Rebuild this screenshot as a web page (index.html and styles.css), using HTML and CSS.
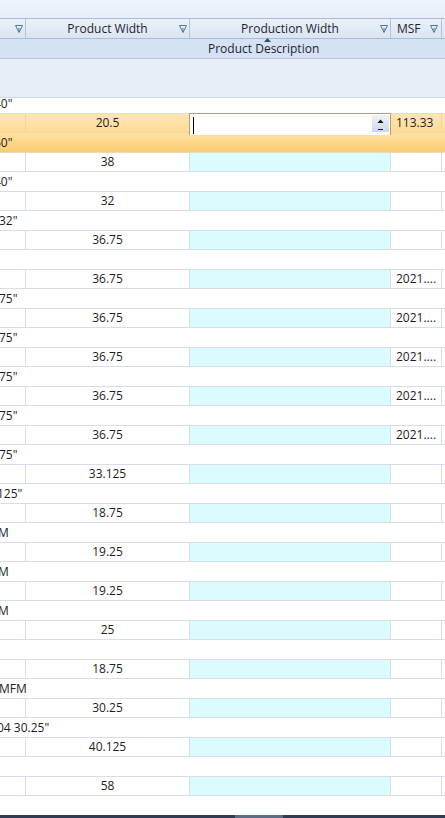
FILE: index.html
```html
<!DOCTYPE html>
<html>
<head>
<meta charset="utf-8">
<link rel="stylesheet" href="styles.css">
</head>
<body>
<div class="grid">
  <div class="top-strip"></div>
  <div class="header cols">
    <div class="hcell h0"><svg class="flt" width="8" height="8" viewBox="0 0 8 8"><path d="M0.5 0.5H7.5L4 7.5Z" fill="none" stroke="#5877a0"/><path d="M4 3V6" stroke="#5877a0"/></svg></div>
    <div class="hcell hc"><span class="lbl">Product Width</span><svg class="flt" width="8" height="8" viewBox="0 0 8 8"><path d="M0.5 0.5H7.5L4 7.5Z" fill="none" stroke="#5877a0"/><path d="M4 3V6" stroke="#5877a0"/></svg></div>
    <div class="hcell hc"><span class="lbl">Production Width</span><svg class="flt" width="8" height="8" viewBox="0 0 8 8"><path d="M0.5 0.5H7.5L4 7.5Z" fill="none" stroke="#5877a0"/><path d="M4 3V6" stroke="#5877a0"/></svg></div>
    <div class="hcell hmsf"><span class="lbl-l">MSF</span><svg class="flt" width="8" height="8" viewBox="0 0 8 8"><path d="M0.5 0.5H7.5L4 7.5Z" fill="none" stroke="#5877a0"/><path d="M4 3V6" stroke="#5877a0"/></svg></div>
    <div class="hcell hlast"></div>
  </div>
  <div class="band"><span class="band-text">Product Description<svg class="sort" width="7" height="4" viewBox="0 0 7 4"><path d="M0 4L3.5 0L7 4Z" fill="#2d4c7c"/></svg></span></div>
  <div class="filter-row"></div>
  <div class="body">
    <div class="inner">
      <div class="desc first"><span class="dt m6">40"</span></div>

      <div class="row cols sel">
        <div class="c"></div><div class="c num">20.5</div>
        <div class="c edit-cell"><div class="editor"><span class="caret"></span><span class="spin"><svg width="7" height="4" viewBox="0 0 7 4"><path d="M0.5 4L3.5 0.5L6.5 4Z" fill="#111"/></svg><span class="dash"></span></span></div></div>
        <div class="c msf">113.33</div><div class="c last"></div>
      </div>
      <div class="desc sel-desc"><span class="dt m6">60"</span></div>

      <div class="row cols"><div class="c"></div><div class="c num">38</div><div class="c pw"></div><div class="c msf"></div><div class="c last"></div></div>
      <div class="desc"><span class="dt m6">40"</span></div>

      <div class="row cols"><div class="c"></div><div class="c num">32</div><div class="c pw"></div><div class="c msf"></div><div class="c last"></div></div>
      <div class="desc"><span class="dt m1">32"</span></div>

      <div class="row cols"><div class="c"></div><div class="c num">36.75</div><div class="c pw"></div><div class="c msf"></div><div class="c last"></div></div>
      <div class="desc"></div>

      <div class="row cols"><div class="c"></div><div class="c num">36.75</div><div class="c pw"></div><div class="c msf">2021....</div><div class="c last"></div></div>
      <div class="desc"><span class="dt m1">75"</span></div>

      <div class="row cols"><div class="c"></div><div class="c num">36.75</div><div class="c pw"></div><div class="c msf">2021....</div><div class="c last"></div></div>
      <div class="desc"><span class="dt m1">75"</span></div>

      <div class="row cols"><div class="c"></div><div class="c num">36.75</div><div class="c pw"></div><div class="c msf">2021....</div><div class="c last"></div></div>
      <div class="desc"><span class="dt m1">75"</span></div>

      <div class="row cols"><div class="c"></div><div class="c num">36.75</div><div class="c pw"></div><div class="c msf">2021....</div><div class="c last"></div></div>
      <div class="desc"><span class="dt m1">75"</span></div>

      <div class="row cols"><div class="c"></div><div class="c num">36.75</div><div class="c pw"></div><div class="c msf">2021....</div><div class="c last"></div></div>
      <div class="desc"><span class="dt m1">75"</span></div>

      <div class="row cols"><div class="c"></div><div class="c num">33.125</div><div class="c pw"></div><div class="c msf"></div><div class="c last"></div></div>
      <div class="desc"><span class="dt m3">125"</span></div>

      <div class="row cols"><div class="c"></div><div class="c num">18.75</div><div class="c pw"></div><div class="c msf"></div><div class="c last"></div></div>
      <div class="desc"><span class="dt m2">M</span></div>

      <div class="row cols"><div class="c"></div><div class="c num">19.25</div><div class="c pw"></div><div class="c msf"></div><div class="c last"></div></div>
      <div class="desc"><span class="dt m2">M</span></div>

      <div class="row cols"><div class="c"></div><div class="c num">19.25</div><div class="c pw"></div><div class="c msf"></div><div class="c last"></div></div>
      <div class="desc"><span class="dt m2">M</span></div>

      <div class="row cols"><div class="c"></div><div class="c num">25</div><div class="c pw"></div><div class="c msf"></div><div class="c last"></div></div>
      <div class="desc"></div>

      <div class="row cols"><div class="c"></div><div class="c num">18.75</div><div class="c pw"></div><div class="c msf"></div><div class="c last"></div></div>
      <div class="desc"><span class="dt m1">MFM</span></div>

      <div class="row cols"><div class="c"></div><div class="c num">30.25</div><div class="c pw"></div><div class="c msf"></div><div class="c last"></div></div>
      <div class="desc"><span class="dt m3">04 30.25"</span></div>

      <div class="row cols"><div class="c"></div><div class="c num">40.125</div><div class="c pw"></div><div class="c msf"></div><div class="c last"></div></div>
      <div class="desc"></div>

      <div class="row cols"><div class="c"></div><div class="c num">58</div><div class="c pw"></div><div class="c msf"></div><div class="c last"></div></div>
      <div class="desc"></div>
    </div>
  </div>
  <div class="hscroll"><div class="thumb"></div></div>
</div>
</body>
</html>
```
FILE: styles.css
```css
* { box-sizing: border-box; }
html, body { margin: 0; padding: 0; }
body {
  width: 445px;
  height: 818px;
  overflow: hidden;
  background: #ffffff;
  font-family: "Open Sans", "Noto Sans", sans-serif;
  font-size: 12px;
  color: #1e1e1e;
}
.grid {
  display: flex;
  flex-direction: column;
  height: 818px;
}
.cols {
  display: grid;
  grid-template-columns: 26px 164px 201px 51px 1fr;
}
.top-strip {
  flex: none;
  height: 18px;
  background: linear-gradient(#eef3fb, #e7eef8);
}
.header {
  flex: none;
  height: 21px;
  border-top: 1px solid #a8bdd8;
  border-bottom: 1px solid #a8bdd8;
  background: linear-gradient(#e9f0f9, #dae5f3);
  color: #1f2530;
}
.hcell {
  display: flex;
  align-items: center;
  border-right: 1px solid #b3c5dc;
  padding-right: 2px;
  line-height: 19px;
}
.h0 { justify-content: flex-end; }
.hc { padding-left: 10px; }
.hc .lbl {
  flex: 1;
  text-align: center;
  white-space: nowrap;
}
.hmsf {
  justify-content: space-between;
  padding-left: 6px;
  padding-right: 3px;
}
.hlast { border-right: none; }
.flt { flex: none; display: block; }
.band {
  flex: none;
  height: 20px;
  background: #d5e2f3;
  border-bottom: 1px solid #b6c7dd;
  padding-left: 208px;
  line-height: 19px;
  color: #1f2530;
}
.band-text {
  position: relative;
  white-space: nowrap;
}
.sort {
  position: absolute;
  left: 56px;
  top: -2px;
}
.filter-row {
  flex: none;
  height: 39px;
  background: #e8eef8;
  border-bottom: 1px solid #d0d9e4;
}
.body {
  flex: 1;
  min-height: 0;
  overflow: hidden;
}
.inner { margin-top: -4px; }
.row {
  height: 19px;
  border-bottom: 1px solid #d5dee8;
  line-height: 18px;
}
.c {
  border-right: 1px solid #d5dee8;
  white-space: nowrap;
  overflow: hidden;
}
.c.last { border-right: none; }
.num { text-align: center; }
.pw { background: #dcfbfe; }
.msf { padding-left: 5px; overflow: hidden; }
.desc {
  height: 20px;
  border-bottom: 1px solid #d5dee8;
  line-height: 19px;
  white-space: nowrap;
  overflow: hidden;
}
.dt { display: inline-block; }
.m1 { margin-left: -1px; }
.m2 { margin-left: -2px; }
.m3 { margin-left: -3px; }
.m6 { margin-left: -6px; }
.sel {
  background: linear-gradient(#fee6b0, #fddc99);
  border-bottom-color: #fbd78f;
}
.sel .c { border-right-color: #efd7a6; }
.sel-desc {
  background: linear-gradient(#fde2a4, #fccb70);
  border-bottom-color: #e9d9b8;
}
.edit-cell {
  position: relative;
  overflow: visible;
}
.editor {
  position: absolute;
  left: -1px;
  top: -1px;
  right: -1px;
  height: 22px;
  background: #ffffff;
  border: 1px solid #c8966c;
  border-bottom: none;
  z-index: 2;
}
.caret {
  position: absolute;
  left: 3px;
  top: 3px;
  width: 1px;
  height: 17px;
  background: #000000;
}
.spin {
  position: absolute;
  right: 1px;
  top: 1px;
  width: 17px;
  height: 17px;
  background: linear-gradient(#eef3fa, #cdd8e8);
  display: flex;
  flex-direction: column;
  align-items: center;
  padding-top: 4px;
  gap: 6px;
}
.spin svg { display: block; }
.dash {
  width: 5px;
  height: 1px;
  background: #222;
}
.hscroll {
  flex: none;
  height: 3px;
  background: #2f3c53;
  position: relative;
}
.thumb {
  margin-left: 235px;
  width: 48px;
  height: 3px;
  background: #5e6d86;
}
```
